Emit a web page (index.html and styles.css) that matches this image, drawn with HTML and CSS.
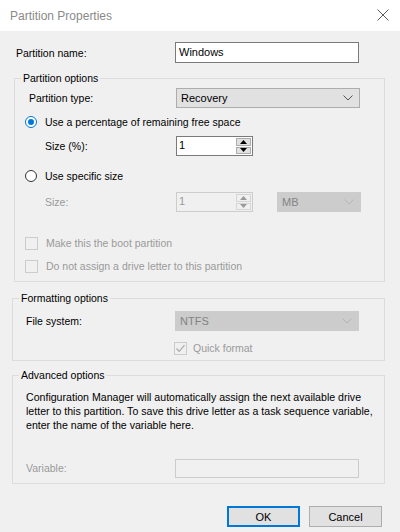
FILE: index.html
```html
<!DOCTYPE html>
<html lang="en">
<head>
    <meta charset="UTF-8">
    <title>Partition Properties</title>
    <link rel="stylesheet" href="styles.css">
</head>
<body>
    <div class="titlebar">
        <span class="title">Partition Properties</span>
        <svg class="close" width="12" height="12" viewBox="0 0 12 12">
            <path d="M0.5 0.5 L11.5 11.5 M11.5 0.5 L0.5 11.5" stroke="#5a5a5a" stroke-width="1" fill="none"/>
        </svg>
    </div>

    <div class="dialog">
        <div class="row name-row">
            <label class="label">Partition name:</label>
            <div class="textbox wide">Windows</div>
        </div>

        <fieldset class="group group-partition">
            <legend>Partition options</legend>

            <div class="row type-row">
                <label class="label">Partition type:</label>
                <div class="select wide">
                    <span>Recovery</span>
                    <svg class="chevron" width="10" height="6" viewBox="0 0 10 6"><path d="M0.5 0.5 L5 5 L9.5 0.5" stroke="#555" fill="none"/></svg>
                </div>
            </div>

            <div class="row option-row first-radio">
                <span class="radio checked"></span>
                <span>Use a percentage of remaining free space</span>
            </div>

            <div class="row size-row">
                <label class="label indent">Size (%):</label>
                <div class="spinner">
                    <span class="spin-value">1</span>
                    <div class="spin-buttons">
                        <span class="spin-btn"><svg width="7" height="4" viewBox="0 0 7 4"><path d="M0 4 L3.5 0 L7 4 Z" fill="#000"/></svg></span>
                        <span class="spin-btn"><svg width="7" height="4" viewBox="0 0 7 4"><path d="M0 0 L3.5 4 L7 0 Z" fill="#000"/></svg></span>
                    </div>
                </div>
            </div>

            <div class="row option-row second-radio">
                <span class="radio"></span>
                <span>Use specific size</span>
            </div>

            <div class="row size-row disabled specific-row">
                <label class="label indent">Size:</label>
                <div class="spinner off">
                    <span class="spin-value">1</span>
                    <div class="spin-buttons">
                        <span class="spin-btn"><svg width="7" height="4" viewBox="0 0 7 4"><path d="M0 4 L3.5 0 L7 4 Z" fill="#9a9a9a"/></svg></span>
                        <span class="spin-btn"><svg width="7" height="4" viewBox="0 0 7 4"><path d="M0 0 L3.5 4 L7 0 Z" fill="#9a9a9a"/></svg></span>
                    </div>
                </div>
                <div class="select off unit">
                    <span>MB</span>
                    <svg class="chevron" width="10" height="6" viewBox="0 0 10 6"><path d="M0.5 0.5 L5 5 L9.5 0.5" stroke="#b5b5b5" fill="none"/></svg>
                </div>
            </div>

            <div class="row option-row disabled boot-row">
                <span class="checkbox"></span>
                <span>Make this the boot partition</span>
            </div>

            <div class="row option-row disabled letter-row">
                <span class="checkbox"></span>
                <span>Do not assign a drive letter to this partition</span>
            </div>
        </fieldset>

        <fieldset class="group group-format">
            <legend>Formatting options</legend>

            <div class="row fs-row">
                <label class="label">File system:</label>
                <div class="select off wide">
                    <span>NTFS</span>
                    <svg class="chevron" width="10" height="6" viewBox="0 0 10 6"><path d="M0.5 0.5 L5 5 L9.5 0.5" stroke="#b5b5b5" fill="none"/></svg>
                </div>
            </div>

            <div class="row option-row disabled quick-row">
                <span class="checkbox">
                    <svg width="11" height="11" viewBox="0 0 11 11"><path d="M1.5 5.5 L4.2 8.3 L9.5 2.2" stroke="#a8a8a8" stroke-width="1.2" fill="none"/></svg>
                </span>
                <span>Quick format</span>
            </div>
        </fieldset>

        <fieldset class="group group-advanced">
            <legend>Advanced options</legend>

            <p class="note">Configuration Manager will automatically assign the next available drive<br>letter to this partition. To save this drive letter as a task sequence variable,<br>enter the name of the variable here.</p>

            <div class="row var-row disabled">
                <label class="label">Variable:</label>
                <div class="textbox wide off"></div>
            </div>
        </fieldset>

        <div class="buttons">
            <button class="btn default">OK</button>
            <button class="btn">Cancel</button>
        </div>
    </div>
</body>
</html>
```

FILE: styles.css
```css
body {
    margin: 0;
    width: 400px;
    height: 532px;
    overflow: hidden;
    background-color: #f0f0f0;
    font-family: 'Liberation Sans', Arial, sans-serif;
    font-size: 10.5px;
    color: #000;
}
.titlebar {
    height: 31px;
    background-color: #fff;
    display: flex;
    align-items: center;
    justify-content: space-between;
    padding: 0 11px 0 10px;
}
.title {
    font-size: 12px;
    color: #8a8a8a;
}
.close {
    display: block;
    margin-top: -2px;
}
.dialog {
    padding: 0 15px 0 12px;
}
.row {
    display: flex;
    align-items: center;
}
.label {
    width: 159px;
    padding-left: 4px;
    flex-shrink: 0;
}
.name-row {
    margin-top: 11px;
    height: 21px;
}
.textbox {
    height: 19px;
    box-sizing: border-box;
    border: 1px solid #7a7a7a;
    background-color: #fff;
    padding: 0 3px;
    line-height: 17px;
    font-size: 11px;
}
.textbox.off {
    border-color: #cccccc;
    background-color: #f0f0f0;
}
.wide {
    width: 184px;
}
.name-row .textbox {
    height: 21px;
    line-height: 19px;
}

/* group boxes */
.group {
    margin: 0;
    padding: 0;
    border: 1px solid #dcdcdc;
    min-width: 0;
}
.group legend {
    padding: 0 2px;
    margin-left: 6px;
    line-height: 14px;
    font-size: 10.5px;
}
.group-partition {
    margin: 8px 0 0 2px;
    padding-bottom: 8px;
}
.group-partition .label {
    width: 147px;
    padding-left: 14px;
}
.group-partition .label.indent {
    padding-left: 30px;
    width: 131px;
}
.group-format {
    margin-top: 9px;
    padding-bottom: 5px;
}
.group-format .label {
    width: 149px;
    padding-left: 13px;
}
.group-advanced {
    margin-top: 7px;
    padding-bottom: 5px;
}
.group-advanced .label {
    width: 149px;
    padding-left: 13px;
}

/* rows in partition group */
.type-row {
    margin-top: 3px;
    height: 20px;
}
.option-row {
    height: 14px;
    padding-left: 10px;
    gap: 8px;
}
.first-radio { margin-top: 7px; }
.size-row {
    margin-top: 7px;
    height: 20px;
}
.second-radio { margin-top: 13px; }
.specific-row { margin-top: 9px; }
.boot-row { margin-top: 24px; }
.letter-row { margin-top: 9px; }
.disabled {
    color: #9a9a9a;
}

.select {
    height: 20px;
    box-sizing: border-box;
    border: 1px solid #adadad;
    background-color: #e1e1e1;
    display: flex;
    align-items: center;
    justify-content: space-between;
    padding: 0 6px 0 4px;
    font-size: 11px;
}
.select.off {
    background-color: #cccccc;
    border-color: #cccccc;
    color: #838383;
}
.select.unit {
    width: 84px;
    margin-left: 24px;
}
.chevron {
    display: block;
}

.spinner {
    width: 77px;
    height: 20px;
    box-sizing: border-box;
    border: 1px solid #7a7a7a;
    background-color: #fff;
    display: flex;
    font-size: 11px;
}
.spinner.off {
    border-color: #cccccc;
    background-color: #f0f0f0;
    color: #9a9a9a;
}
.spin-value {
    flex: 1;
    padding-left: 2px;
    line-height: 17px;
}
.spin-buttons {
    width: 15px;
    display: flex;
    flex-direction: column;
    padding: 1px;
    gap: 1px;
}
.spin-btn {
    flex: 1;
    background-color: #e1e1e1;
    border: 1px solid #adadad;
    display: flex;
    align-items: center;
    justify-content: center;
}
.spinner.off .spin-btn {
    background-color: #f0f0f0;
    border-color: #d5d5d5;
}
.spin-btn svg {
    display: block;
}

.radio {
    width: 12px;
    height: 12px;
    box-sizing: border-box;
    border: 1px solid #333;
    border-radius: 50%;
    background-color: #fff;
    display: flex;
    align-items: center;
    justify-content: center;
    flex-shrink: 0;
}
.radio.checked {
    border-color: #0078d7;
}
.radio.checked::after {
    content: "";
    width: 6px;
    height: 6px;
    border-radius: 50%;
    background-color: #0078d7;
}
.checkbox {
    width: 13px;
    height: 13px;
    box-sizing: border-box;
    border: 1px solid #cccccc;
    background-color: #f0f0f0;
    display: flex;
    align-items: center;
    justify-content: center;
    flex-shrink: 0;
}
.checkbox svg {
    display: block;
}

/* formatting rows */
.fs-row {
    margin-top: 6px;
    height: 20px;
}
.quick-row {
    margin-top: 10px;
    padding-left: 161px;
    gap: 6px;
}

/* advanced */
.note {
    margin: 8px 0 0 13px;
    line-height: 14px;
    font-size: 10.6px;
    white-space: nowrap;
}
.var-row {
    margin-top: 26px;
    height: 20px;
}

.buttons {
    display: flex;
    justify-content: flex-end;
    gap: 9px;
    margin-top: 22px;
    padding-right: 3px;
}
.btn {
    width: 73px;
    height: 21px;
    box-sizing: border-box;
    border: 1px solid #adadad;
    background-color: #e1e1e1;
    font-family: inherit;
    font-size: 11px;
    padding: 0;
    color: #000;
}
.btn.default {
    border: 2px solid #0078d7;
}
```
